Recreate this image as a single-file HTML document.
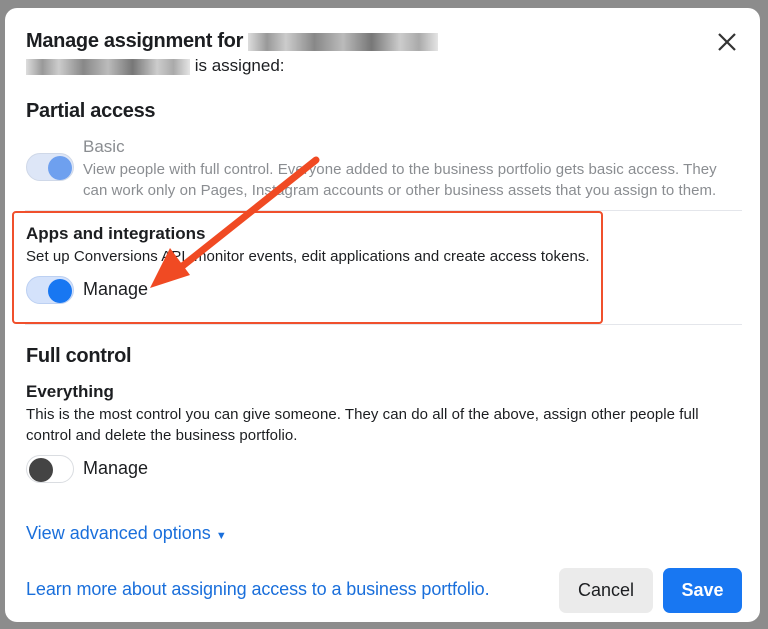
<!DOCTYPE html>
<html><head><style>
*{margin:0;padding:0;box-sizing:border-box}
body{width:768px;height:629px;background:#8c8c8c;position:relative;overflow:hidden;font-family:"Liberation Sans",sans-serif;color:#1c1e21}
.dlg{position:absolute;left:5px;top:8px;width:755px;height:614px;background:#fff;border-radius:12px}
.a{position:absolute;white-space:nowrap}
.h{font-weight:bold;font-size:20px;letter-spacing:-0.3px}
.t{font-size:15px;letter-spacing:0.05px;line-height:21px}
.blur{display:inline-block;height:18px;background:linear-gradient(90deg,#ddd,#999 10%,#ccc 20%,#888 35%,#bbb 50%,#777 65%,#ccc 80%,#aaa 90%,#e5e5e5);vertical-align:middle}
.tog{position:absolute;width:48px;height:28px;border-radius:14px}
.knob{position:absolute;top:2px;width:24px;height:24px;border-radius:12px}
</style></head><body>
<div class="dlg"></div>
<div class="a h" style="left:26px;top:30px">Manage assignment for <span class="blur" style="width:190px"></span></div>
<div class="a" style="left:26px;top:56px;font-size:17px"><span class="blur" style="width:164px;height:16px"></span> is assigned:</div>
<svg class="a" style="left:717px;top:32px" width="20" height="20"><path d="M2 2L18 18M18 2L2 18" stroke="#333" stroke-width="2.2"/></svg>
<div class="a h" style="left:26px;top:100px">Partial access</div>
<div class="a" style="left:83px;top:137px;font-size:17px;color:#8a8d91">Basic</div>
<div class="a t" style="left:83px;top:159px;color:#8a8d91">View people with full control. Everyone added to the business portfolio gets basic access. They<br>can work only on Pages, Instagram accounts or other business assets that you assign to them.</div>
<div class="tog" style="left:26px;top:153px;background:#dde6f7;border:1px solid #cfd8e8"><div class="knob" style="left:21px;background:#6ea0ef"></div></div>
<div class="a" style="left:25px;top:210px;width:717px;height:1px;background:#e4e6eb"></div>
<div class="a" style="left:25px;top:324px;width:717px;height:1px;background:#e4e6eb"></div>
<div class="a" style="left:12px;top:211px;width:591px;height:113px;border:2px solid #f0502c;border-radius:4px;background:#fff"></div>
<div class="a" style="left:26px;top:224px;font-weight:bold;font-size:17px">Apps and integrations</div>
<div class="a t" style="left:26px;top:246px">Set up Conversions API, monitor events, edit applications and create access tokens.</div>
<div class="tog" style="left:26px;top:276px;background:#d4e2fb;border:1px solid #bcd0f2"><div class="knob" style="left:21px;background:#1877f2"></div></div>
<div class="a" style="left:83px;top:279px;font-size:18px">Manage</div>
<svg class="a" style="left:0;top:0" width="768" height="629"><path d="M316 160L180 268" stroke="#f04a23" stroke-width="7" stroke-linecap="round"/><path d="M150 288L170 248L190 275Z" fill="#f04a23"/></svg>
<div class="a h" style="left:26px;top:345px">Full control</div>
<div class="a" style="left:26px;top:382px;font-weight:bold;font-size:17px">Everything</div>
<div class="a t" style="left:26px;top:404px">This is the most control you can give someone. They can do all of the above, assign other people full<br>control and delete the business portfolio.</div>
<div class="tog" style="left:26px;top:455px;background:#fff;border:1px solid #dadde1"><div class="knob" style="left:2px;background:#444"></div></div>
<div class="a" style="left:83px;top:458px;font-size:18px">Manage</div>
<div class="a" style="left:26px;top:523px;font-size:18px;color:#1a6fdb">View advanced options <span style="font-size:11px">▼</span></div>
<div class="a" style="left:26px;top:579px;font-size:18px;color:#1a6fdb;letter-spacing:-0.1px">Learn more about assigning access to a business portfolio.</div>
<div class="a" style="left:559px;top:568px;width:94px;height:45px;background:#ebebeb;border-radius:7px;font-size:18px;text-align:center;line-height:45px">Cancel</div>
<div class="a" style="left:663px;top:568px;width:79px;height:45px;background:#1877f2;border-radius:7px;font-size:18px;font-weight:bold;color:#fff;text-align:center;line-height:45px">Save</div>
</body></html>
